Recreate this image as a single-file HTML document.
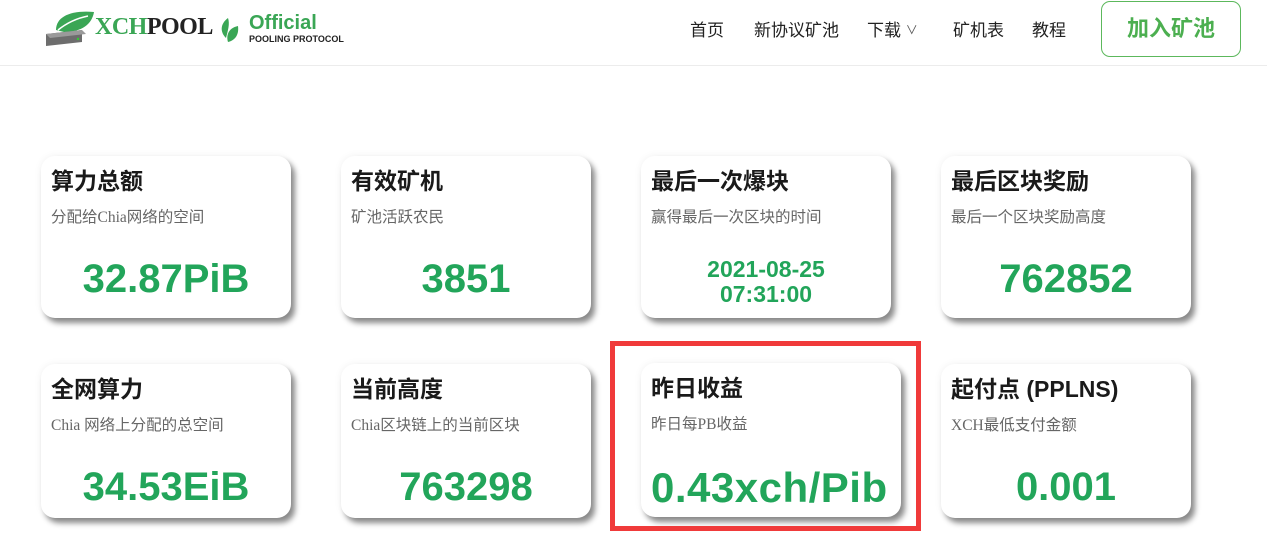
<!DOCTYPE html>
<html><head><meta charset="utf-8"><style>
*{margin:0;padding:0;box-sizing:border-box}
body{width:1267px;height:536px;background:#fff;font-family:"Liberation Sans","Noto Sans CJK SC",sans-serif;position:relative;overflow:hidden}
.hdr{position:absolute;left:0;top:0;width:1267px;height:66px;border-bottom:1px solid #ececec}
.nav{position:absolute;top:16px;font-size:17px;color:#222}
.btn{position:absolute;left:1101px;top:1px;width:140px;height:56px;border:1.5px solid #5cb85c;border-radius:9px;color:#4caf50;font-weight:bold;font-size:22px;text-align:center;line-height:54px}
.card{position:absolute;width:250px;height:162px;background:#fff;border-radius:14px;box-shadow:4px 5px 6px rgba(0,0,0,.45),0 0 8px rgba(0,0,0,.06)}
.card h3{position:absolute;left:10px;top:6px;font-size:23px;font-weight:bold;color:#1a1a1a}
.card p{position:absolute;left:10px;top:49px;font-size:15.5px;color:#666;font-family:"Liberation Serif","Noto Sans CJK SC",serif}
.card .v{position:absolute;left:0;right:0;top:101px;text-align:center;font-size:40px;font-weight:bold;color:#22a55a}
.card .d{position:absolute;left:0;right:0;top:101px;text-align:center;font-size:23px;line-height:25px;font-weight:bold;color:#22a55a}
</style></head><body>
<div class="hdr">
<svg style="position:absolute;left:42px;top:8px" width="60" height="40" viewBox="0 0 60 40">
<path d="M14 22 C14 8 30 2 52 4 C50 16 40 24 22 24 Z" fill="#3aa655"/>
<path d="M16 22 C26 14 36 10 46 8" stroke="#fff" stroke-width="1.5" fill="none"/>
<path d="M4 26 L40 22 L40 34 L4 38 Z" fill="#6d6d6d"/><path d="M4 26 L40 22 L44 26 L8 30Z" fill="#9a9a9a"/>
<circle cx="36" cy="31" r="1.2" fill="#3c3"/></svg>
<div style="position:absolute;left:95px;top:14px;font-family:'Liberation Serif',serif;font-weight:bold;font-size:24px;letter-spacing:-0.5px"><span style="color:#3aa655">XCH</span><span style="color:#222">POOL</span></div>
<svg style="position:absolute;left:218px;top:16px" width="22" height="28" viewBox="0 0 22 28"><path d="M10 2 C2 8 2 16 8 22 C10 14 12 8 10 2Z" fill="#3aa655"/><path d="M20 10 C10 12 8 20 10 26 C18 24 21 18 20 10Z" fill="#3aa655"/></svg>
<div style="position:absolute;left:249px;top:12px;color:#3aa655;font-weight:bold;font-size:20px">Official</div>
<div style="position:absolute;left:249px;top:34px;color:#222;font-weight:bold;font-size:9px">POOLING PROTOCOL</div>
<div class="nav" style="left:690px">首页</div>
<div class="nav" style="left:754px">新协议矿池</div>
<div class="nav" style="left:867px">下载 <span style="color:#555;font-size:12px;position:relative;top:-2px">&#x2228;</span></div>
<div class="nav" style="left:953px">矿机表</div>
<div class="nav" style="left:1032px">教程</div>
<div class="btn">加入矿池</div>
</div>

<div class="card" style="left:41px;top:156px"><h3>算力总额</h3><p>分配给Chia网络的空间</p><div class="v">32.87PiB</div></div>
<div class="card" style="left:341px;top:156px"><h3>有效矿机</h3><p>矿池活跃农民</p><div class="v">3851</div></div>
<div class="card" style="left:641px;top:156px"><h3>最后一次爆块</h3><p>赢得最后一次区块的时间</p><div class="d">2021-08-25<br>07:31:00</div></div>
<div class="card" style="left:941px;top:156px"><h3>最后区块奖励</h3><p>最后一个区块奖励高度</p><div class="v">762852</div></div>

<div class="card" style="left:41px;top:364px;height:154px"><h3>全网算力</h3><p>Chia 网络上分配的总空间</p><div class="v">34.53EiB</div></div>
<div class="card" style="left:341px;top:364px;height:154px"><h3>当前高度</h3><p>Chia区块链上的当前区块</p><div class="v">763298</div></div>
<div class="card" style="left:641px;top:363px;height:154px;width:260px"><h3>昨日收益</h3><p>昨日每PB收益</p><div class="v" style="left:10px;text-align:left;font-size:42px;letter-spacing:0.5px">0.43xch/Pib</div></div>
<div class="card" style="left:941px;top:364px;height:154px"><h3>起付点 (PPLNS)</h3><p>XCH最低支付金额</p><div class="v">0.001</div></div>

<div style="position:absolute;left:610px;top:341px;width:311px;height:190px;border:5px solid #f03a3a"></div>
</body></html>
